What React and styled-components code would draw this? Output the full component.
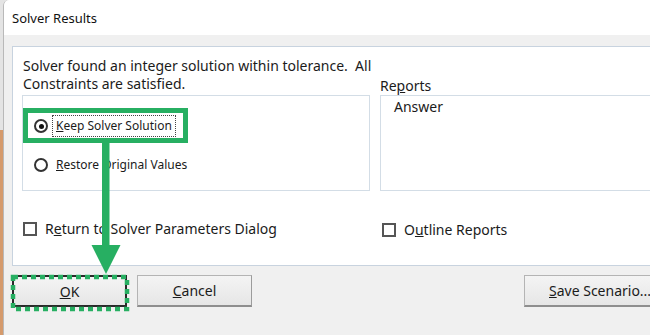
import React from 'react'
import styled, { createGlobalStyle } from 'styled-components'

const GlobalStyle = createGlobalStyle`
  html, body {
    margin: 0;
    padding: 0;
    width: 650px;
    height: 335px;
    overflow: hidden;
    background: linear-gradient(#e4e4e4 0 130px, #d59a6c 130px);
  }
  body {
    font-family: 'Noto Sans', 'Open Sans', sans-serif;
    font-size: 14px;
    color: #1b1b1b;
  }
`

const GREEN = '#27af62'

function App() {
  return (
    <>
      <GlobalStyle />
      <Window>
        <TitleBar>Solver Results</TitleBar>
        <Body>
          <Panel>
            <TopGrid>
              <LeftColumn>
                <Message>
                  {'Solver found an integer solution within tolerance.  All'}
                  <br />
                  Constraints are satisfied.
                </Message>
                <GroupBox>
                  <Radio>
                    <RadioCircle checked />
                    <FocusLabel focused>
                      <u>K</u>eep Solver Solution
                    </FocusLabel>
                  </Radio>
                  <Radio>
                    <RadioCircle />
                    <FocusLabel>
                      <u>R</u>estore Original Values
                    </FocusLabel>
                  </Radio>
                </GroupBox>
              </LeftColumn>
              <RightColumn>
                <FieldLabel>
                  Re<u>p</u>orts
                </FieldLabel>
                <ListBox>
                  <ListItem>Answer</ListItem>
                </ListBox>
              </RightColumn>
            </TopGrid>
            <CheckRow>
              <Check offset={1}>
                <CheckBox />
                <span>
                  R<u>e</u>turn to Solver Parameters Dialog
                </span>
              </Check>
              <Check offset={2} drop={3}>
                <CheckBox />
                <span>
                  O<u>u</u>tline Reports
                </span>
              </Check>
            </CheckRow>
          </Panel>
          <ButtonRow>
            <Button isDefault>
              <u>O</u>K
            </Button>
            <Button>
              <u>C</u>ancel
            </Button>
            <Spacer />
            <Button wide>
              <u>S</u>ave Scenario...
            </Button>
          </ButtonRow>
        </Body>
        <Annotation width="650" height="335" viewBox="0 0 650 335">
          <rect x="24.5" y="110.5" width="160" height="30" fill="none" stroke={GREEN} strokeWidth="5" />
          <rect x="101" y="143" width="7.5" height="103" fill={GREEN} />
          <polygon points="90.5,245 119.5,245 105,274" fill={GREEN} />
          <rect
            x="12"
            y="277"
            width="114"
            height="32"
            fill="none"
            stroke={GREEN}
            strokeWidth="4.5"
            strokeDasharray="5 4"
          />
        </Annotation>
      </Window>
    </>
  )
}

export default App

const Window = styled.div`
  position: relative;
  margin-left: 3px;
  width: 700px;
  height: 335px;
  background: #f0f0f0;
  border-left: 1px solid #b9b9b9;
  border-top-left-radius: 6px;
  overflow: hidden;
  display: flex;
  flex-direction: column;
`

const TitleBar = styled.div`
  height: 35px;
  background: #fff;
  padding-left: 8px;
  display: flex;
  align-items: center;
  font-size: 13px;
  color: #111;
`

const Body = styled.div`
  flex: 1;
  padding: 11px 0 0 8px;
`

const Panel = styled.div`
  height: 220px;
  background: #fff;
  border: 1px solid #c8d3df;
  border-right: none;
  padding: 10px 0 0 9px;
  box-sizing: border-box;
`

const TopGrid = styled.div`
  display: grid;
  grid-template-columns: 348px 1fr;
  column-gap: 10px;
  align-items: end;
`

const LeftColumn = styled.div`
  display: flex;
  flex-direction: column;
  gap: 2px;
`

const Message = styled.div`
  line-height: 18px;
  white-space: pre;
  margin-left: 1px;
`

const GroupBox = styled.div`
  height: 96px;
  box-sizing: border-box;
  border: 1px solid #d3dde6;
  display: flex;
  flex-direction: column;
  padding: 18px 0 0 11px;
  gap: 15px;
`

const Radio = styled.div`
  display: flex;
  align-items: center;
  height: 24px;
  font-size: 12px;
`

const RadioCircle = styled.span`
  width: 14px;
  height: 14px;
  box-sizing: border-box;
  border-radius: 50%;
  border: 2px solid #333;
  display: flex;
  align-items: center;
  justify-content: center;
  margin-right: 4px;
  &::after {
    content: '';
    display: ${(p) => (p.checked ? 'block' : 'none')};
    width: 5px;
    height: 5px;
    border-radius: 50%;
    background: #111;
  }
`

const FocusLabel = styled.span`
  padding: 2px 3px;
  line-height: 16px;
  border: 1px dotted ${(p) => (p.focused ? '#444' : 'transparent')};
`

const RightColumn = styled.div`
  display: flex;
  flex-direction: column;
`

const FieldLabel = styled.div`
  line-height: 18px;
`

const ListBox = styled.div`
  height: 96px;
  box-sizing: border-box;
  border: 1px solid #d3dde6;
  border-right: none;
  padding: 2px 0 0 13px;
`

const ListItem = styled.div`
  line-height: 18px;
`

const CheckRow = styled.div`
  display: grid;
  grid-template-columns: 348px 1fr;
  column-gap: 10px;
  margin-top: 27px;
`

const Check = styled.div`
  display: flex;
  align-items: center;
  gap: 8px;
  line-height: 18px;
  margin-left: ${(p) => p.offset}px;
  margin-top: ${(p) => p.drop || 0}px;
`

const CheckBox = styled.span`
  width: 14px;
  height: 14px;
  box-sizing: border-box;
  border: 2px solid #555;
  background: #fff;
`

const ButtonRow = styled.div`
  display: flex;
  align-items: center;
  gap: 10px;
  margin-top: 9px;
`

const Spacer = styled.div`
  flex: 1;
  max-width: 252px;
`

const Button = styled.button`
  width: ${(p) => (p.wide ? '140px' : '115px')};
  height: 32px;
  box-sizing: border-box;
  font-family: inherit;
  font-size: 14px;
  color: #1b1b1b;
  background: linear-gradient(#f4f4f4, #e6e6e6);
  border: ${(p) => (p.isDefault ? '2px solid #2a2a2a' : '1px solid #b4b4b4')};
  border-bottom-width: 2px;
  border-bottom-color: ${(p) => (p.isDefault ? '#2a2a2a' : '#8e8e8e')};
  border-right-color: ${(p) => (p.isDefault ? '#2a2a2a' : '#9c9c9c')};
  padding: 0;
  ${(p) => p.wide && 'text-align: left; padding-left: 24px;'}
`

const Annotation = styled.svg`
  position: absolute;
  top: 0;
  left: -3px;
  pointer-events: none;
`
